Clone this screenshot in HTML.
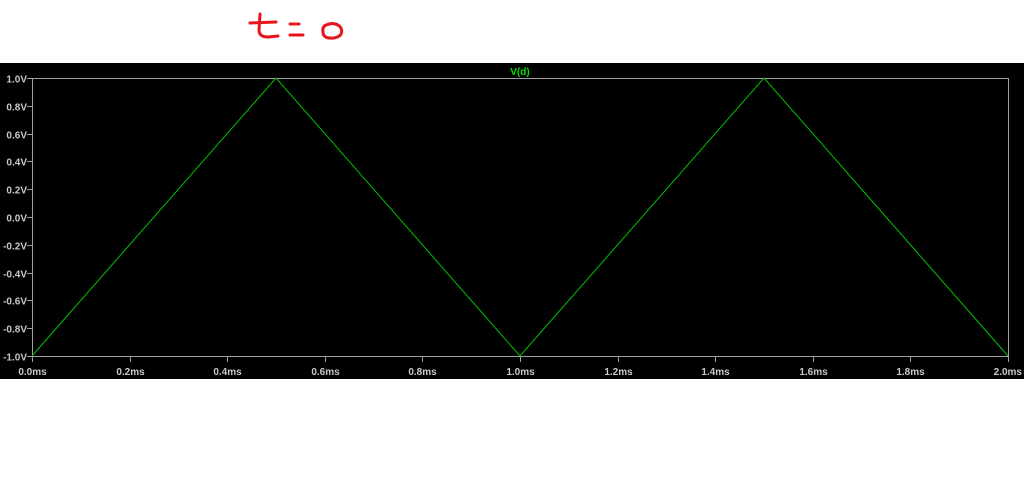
<!DOCTYPE html>
<html><head><style>
body{margin:0;width:1024px;height:501px;background:#fff;overflow:hidden;position:relative;font-family:"Liberation Sans",sans-serif}
</style></head><body>
<svg width="1024" height="501" style="position:absolute;left:0;top:0">
<g stroke="#e8141c" stroke-width="3" fill="none" stroke-linecap="round" stroke-linejoin="round">
<path d="M260 14 L259 30 Q259 37 268 37 L278 36"/>
<path d="M250 23 L276 22"/>
<path d="M290 24 L299 24"/>
<path d="M290 35 L303 35"/>
<path d="M326 25 Q336 21 341 28 Q344 36 334 38 Q323 39 323 32 Q322 27 326 25 Z"/>
</g>
<rect x="0" y="63" width="1024" height="316" fill="#000"/>
<g stroke="#a0a0a0" stroke-width="1" fill="none">
<rect x="32.5" y="78.5" width="976" height="278"/>
</g>
<g stroke="#a0a0a0" stroke-width="1" id="ticks"></g>
<text x="520" y="75" fill="#00e000" font-size="10" font-weight="bold" text-anchor="middle">V(d)</text>
<g fill="#c8c8c8" font-size="10" font-weight="bold" id="labels"></g>
<polyline points="32,356 276,78 520,356 764,78 1008,356" stroke="#00c000" stroke-width="1" fill="none"/>
</svg>
<script>
var t=document.getElementById('ticks'),l=document.getElementById('labels'),ns='http://www.w3.org/2000/svg';
function el(p,tag,a,txt){var e=document.createElementNS(ns,tag);for(var k in a)e.setAttribute(k,a[k]);if(txt)e.textContent=txt;p.appendChild(e);}
var yl=['1.0V','0.8V','0.6V','0.4V','0.2V','0.0V','-0.2V','-0.4V','-0.6V','-0.8V','-1.0V'];
for(var i=0;i<11;i++){var y=Math.round(78+i*27.8)+0.5;el(t,'line',{x1:27,x2:32,y1:y,y2:y});el(l,'text',{x:27,y:y+4,'text-anchor':'end'},yl[i]);}
var xl=['0.0ms','0.2ms','0.4ms','0.6ms','0.8ms','1.0ms','1.2ms','1.4ms','1.6ms','1.8ms','2.0ms'];
for(var i=0;i<11;i++){var x=Math.round(32+i*97.6)+0.5;el(t,'line',{x1:x,x2:x,y1:357,y2:362});el(l,'text',{x:i==10?1022:x,y:375,'text-anchor':i==10?'end':'middle'},xl[i]);}
</script>
</body></html>
